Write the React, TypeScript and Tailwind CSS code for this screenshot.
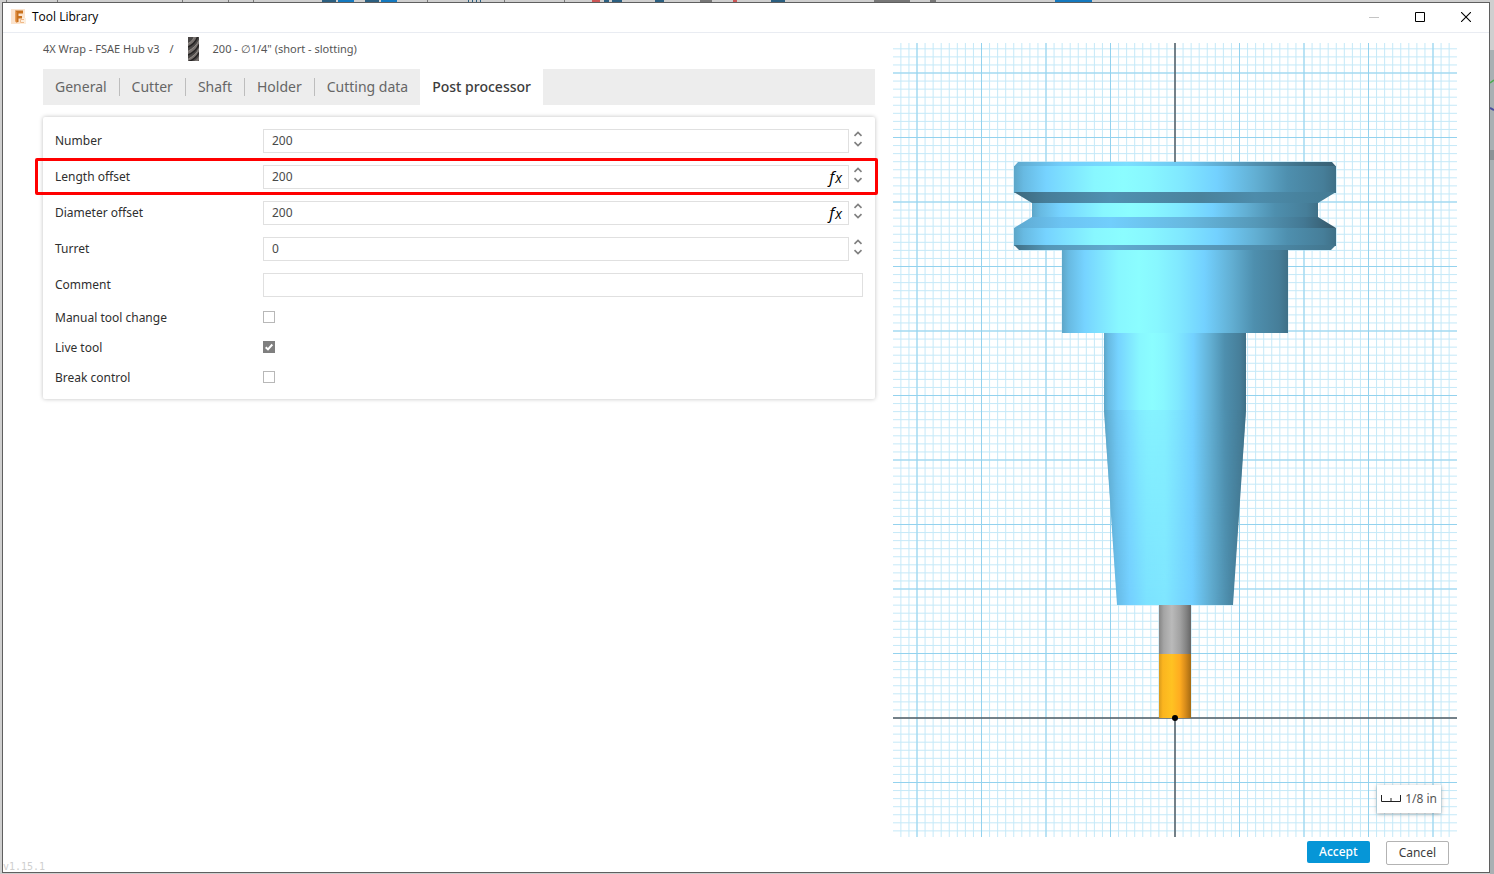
import React, { useState } from 'react';

const TABS = ['General', 'Cutter', 'Shaft', 'Holder', 'Cutting data', 'Post processor'];

// Drawing units of the preview: origin is the tool tip
const VIEW_W = 564;
const VIEW_H = 794;
const ORIGIN_X = 282;
const ORIGIN_Y = 675;
const MAJOR = 64.5;
const MINOR = MAJOR / 8;

interface NumberRowProps {
  id: string;
  label: string;
  value: number;
  onChange: (value: number) => void;
  hasFormula?: boolean;
  highlighted?: boolean;
}

const NumberRow: React.FC<NumberRowProps> = ({
  id,
  label,
  value,
  onChange,
  hasFormula = false,
  highlighted = false
}) => {
  return (
    <div className="relative flex h-9 items-center px-3">
      <label htmlFor={id} className="w-52 shrink-0 text-[#2f2f2f]">{label}</label>
      <div className="flex h-6 min-w-0 flex-1 items-center border border-[#e0e0e0] bg-white">
        <input
          id={id}
          type="text"
          inputMode="numeric"
          value={value}
          onChange={e => onChange(Number(e.target.value) || 0)}
          className="h-full min-w-0 flex-1 bg-transparent px-2 pb-[2px] text-[#4a4a4a] outline-none"
        />
        {hasFormula && (
          <button
            type="button"
            aria-label={`${label} expression`}
            className="flex items-baseline gap-px px-[6px] font-['Open_Sans',sans-serif] text-base leading-5 text-black italic"
          >
            f<span className="text-sm">x</span>
          </button>
        )}
      </div>
      <div className="flex w-[14px] shrink-0 flex-col items-end gap-1 pb-1">
        <button type="button" aria-label={`Increase ${label}`} onClick={() => onChange(value + 1)}>
          <svg className="block h-[6px] w-[10px]" viewBox="0 0 10 6" fill="none" stroke="#808080" strokeWidth={1.7}>
            <path d="M1.5 4.8 5 1.5l3.5 3.3" />
          </svg>
        </button>
        <button type="button" aria-label={`Decrease ${label}`} onClick={() => onChange(value - 1)}>
          <svg className="block h-[6px] w-[10px]" viewBox="0 0 10 6" fill="none" stroke="#808080" strokeWidth={1.7}>
            <path d="M1.5 1.2 5 4.5l3.5-3.3" />
          </svg>
        </button>
      </div>
      {highlighted && (
        <div className="pointer-events-none absolute -top-px -right-[3px] bottom-0 -left-2 rounded-xs border-3 border-[#ff0000]" />
      )}
    </div>
  );
};

interface CheckRowProps {
  id: string;
  label: string;
  defaultChecked?: boolean;
}

const CheckRow: React.FC<CheckRowProps> = ({ id, label, defaultChecked = false }) => (
  <div className="flex h-[30px] items-center px-3">
    <label htmlFor={id} className="w-52 shrink-0 text-[#2f2f2f]">{label}</label>
    <span className="relative mb-[2px] block size-3">
      <input
        id={id}
        type="checkbox"
        defaultChecked={defaultChecked}
        className="peer block size-3 appearance-none border border-[#b8b8b8] bg-white checked:border-[#7f7f7f] checked:bg-[#7f7f7f]"
      />
      <svg
        className="pointer-events-none absolute inset-0 hidden size-3 peer-checked:block"
        viewBox="0 0 12 12"
        fill="none"
        stroke="#fff"
        strokeWidth={2}
      >
        <path d="M2.7 6.2 5 8.4 9.3 3.5" />
      </svg>
    </span>
  </div>
);

const FusionLogo = () => (
  <svg className="h-4 w-4" viewBox="0 0 16 16">
    <rect x="0" y="0" width="14" height="15" fill="#fbe3cd" />
    <rect x="9" y="9" width="6" height="6" fill="#fdeedd" />
    <path d="M4 1.500h8v3H7.500V7H11v2.500H7.500V13L5 13.500V3z" fill="#c8701c" />
    <path d="M4 1.500 5.500 3v10.500L4 12.500z" fill="#e9a05c" />
    <path d="M13 10.500H9.500v3H13" fill="none" stroke="#efb98a" strokeWidth="1" />
  </svg>
);

const EndMillIcon = () => (
  <svg className="h-6 w-[11px]" viewBox="0 0 11 24">
    <rect width="11" height="24" fill="#4a4746" />
    <path d="M0 6C3 5 5 3 6 0h3C8 4 4 7 0 9zM0 14C5 11 9 8 11 3v4C9 11 5 15 0 17zM0 22c5-3 9-6 11-11v4c-2 4-6 7-11 9zM6 24c2-1 4-3 5-5v4l-1 1z" fill="#77716e" />
    <path d="M0 10C5 8 8 4 9.500 0M0 18c5-2 9-6 11-10.500M1 24.500c5-2 8-5 10-9" fill="none" stroke="#242222" strokeWidth="1.400" />
    <path d="M0 6.500C3 5 5 3 6 0M0 14.300C5 11.500 9 8 11 3.300M0 22.300c5-3 9-6 11-11" fill="none" stroke="#a8a29e" strokeWidth="0.600" />
  </svg>
);

const gridOffsets = (step: number, from: number, to: number, origin: number) => {
  const offsets: number[] = [];
  for (let i = Math.ceil((from - origin) / step); origin + i * step <= to; i++) {
    offsets.push(origin + i * step);
  }
  return offsets;
};

const gridPath = (step: number) =>
  gridOffsets(step, 0, VIEW_W, ORIGIN_X).map(x => `M${x} 0V${VIEW_H}`).join('') +
  gridOffsets(step, 0, VIEW_H, ORIGIN_Y).map(y => `M0 ${y}H${VIEW_W}`).join('');

const GRADIENTS: Record<string, [number, string][]> = {
  body: [[0, '#5da6c8'], [0.03, '#68bae2'], [0.1, '#76d3ff'], [0.17, '#7fe4ff'], [0.25, '#88f7ff'], [0.34, '#8bfdff'], [0.42, '#88f7ff'], [0.52, '#80e8ff'], [0.63, '#73d1ff'], [0.75, '#62afd3'], [0.85, '#4e8fae'], [0.96, '#467e99'], [1, '#3f7087']],
  taper: [[0, '#569bbb'], [0.08, '#66b8e2'], [0.18, '#74cfff'], [0.3, '#7ce2ff'], [0.43, '#7fe6ff'], [0.53, '#78d9ff'], [0.62, '#71cfff'], [0.75, '#60acd0'], [0.88, '#4b8aa8'], [1, '#40728a']],
  topChamfer: [[0, '#5fa8cc'], [0.15, '#72cdfb'], [0.35, '#7bdfff'], [0.55, '#6cc4ef'], [0.75, '#528fae'], [0.9, '#3e6f86'], [1, '#375f73']],
  underside: [[0, '#3c687c'], [0.1, '#467d98'], [0.3, '#5091b1'], [0.58, '#4a829c'], [0.75, '#4d8cab'], [1, '#437a93']],
  upside: [[0, '#5ea8cf'], [0.15, '#6cc4f3'], [0.3, '#71cefc'], [0.55, '#66b7de'], [0.75, '#5598b8'], [0.9, '#437893'], [1, '#345768']],
  bottomChamfer: [[0, '#3f6e84'], [0.1, '#5496b6'], [0.3, '#60abd0'], [0.6, '#5799bb'], [0.8, '#4c89a7'], [1, '#42758d']],
  shank: [[0, '#858585'], [0.15, '#a5a5a5'], [0.4, '#bababa'], [0.65, '#a3a3a3'], [0.85, '#838383'], [1, '#666666']],
  flute: [[0, '#d99a1c'], [0.12, '#fbb51f'], [0.4, '#ffc222'], [0.65, '#ffac20'], [0.82, '#d98d1b'], [1, '#a66b12']]
};

const ToolPreview = () => (
  <svg
    className="absolute inset-0 h-full w-full"
    viewBox={`0 0 ${VIEW_W} ${VIEW_H}`}
    preserveAspectRatio="xMidYMid slice"
    role="img"
    aria-label="Tool and holder preview"
  >
    <defs>
      {Object.entries(GRADIENTS).map(([name, stops]) => (
        <linearGradient key={name} id={name}>
          {stops.map(([offset, color]) => (
            <stop key={offset} offset={offset} stopColor={color} />
          ))}
        </linearGradient>
      ))}
      <linearGradient id="taperFade" x1="0" y1="0" x2="0" y2="1">
        <stop offset="0" stopColor="#fff" />
        <stop offset="1" stopColor="#000" />
      </linearGradient>
      <mask id="taperMask">
        <rect x="200" y="367" width="160" height="195" fill="url(#taperFade)" />
      </mask>
    </defs>

    <path d={gridPath(MINOR)} stroke="#c5e9f8" fill="none" />
    <path d={gridPath(MAJOR)} stroke="#93d2ee" fill="none" />
    <path d={`M${ORIGIN_X} 0V${VIEW_H}M0 ${ORIGIN_Y}H${VIEW_W}`} stroke="#2e1f1c" fill="none" />

    {/* Flange */}
    <path d="M125 119H439L443 123.500H121z" fill="url(#topChamfer)" />
    <path d="M121 123H443V150H121z" fill="url(#body)" />
    <path d="M121 149H443L425 160H139z" fill="url(#underside)" />
    <path d="M139 160H425V175H139z" fill="url(#body)" />
    <path d="M139 174H425L443 185H121z" fill="url(#upside)" />
    <path d="M121 185H443V203H121z" fill="url(#body)" />
    <path d="M121 202H443L438 207H126z" fill="url(#bottomChamfer)" />

    {/* Holder body and taper */}
    <path d="M169 207H395V290H169z" fill="url(#body)" />
    <path d="M211 290H353V367H211z" fill="url(#body)" />
    <path d="M211 367H353L340 562H224z" fill="url(#taper)" />
    <path d="M211 367H353L340 562H224z" fill="url(#body)" opacity="0.600" mask="url(#taperMask)" />

    {/* Cutter */}
    <path d="M266 562H298V611H266z" fill="url(#shank)" />
    <path d="M266 611H298V675H266z" fill="url(#flute)" />
    <circle cx={ORIGIN_X} cy={ORIGIN_Y} r="3" fill="#000" />
  </svg>
);

// Slivers of the main application that stay visible around the dialog
const BackdropEdges = () => (
  <>
    <svg className="absolute top-0 left-0 h-[2px] w-full" preserveAspectRatio="none" viewBox="0 0 1494 2">
      <path d="M338 1h16M381 1h16M1055 1h37" stroke="#1479bf" strokeWidth="2" />
      <path d="M322 1h14M365 1h14M468 1h1M472 1h1M476 1h1M480 1h1M604 1h5M612 1h10M655 1h9M771 1h14" stroke="#2b5f80" strokeWidth="2" />
      <path d="M6 1h1M57 1h1M182 1h1M228 1h1M253 1h1M427 1h1M504 1h1M564 1h1M700 1h12M874 1h36M930 1h6" stroke="#777" strokeWidth="2" />
      <path d="M592 1h8M733 1h4" stroke="#c55" strokeWidth="2" />
    </svg>
    <svg className="absolute top-0 right-0 h-full w-1" preserveAspectRatio="none" viewBox="0 0 4 874">
      <path d="M0 50h4v824H0z" fill="#a9b0b3" />
      <path d="M0 83 4 80" stroke="#4bab4e" strokeWidth="1.500" />
      <path d="M0 108 4 110" stroke="#4b4fa0" strokeWidth="2" />
      <path d="M0 150h4v10H0z" fill="#8b9296" />
    </svg>
  </>
);

export default function App() {
  const [activeTab, setActiveTab] = useState('Post processor');
  const [number, setNumber] = useState(200);
  const [lengthOffset, setLengthOffset] = useState(200);
  const [diameterOffset, setDiameterOffset] = useState(200);
  const [turret, setTurret] = useState(0);

  return (
    <div className="relative flex min-h-screen flex-col bg-[#cfcfcf] pt-[2px] pr-1 pb-px pl-[2px] font-['Noto_Sans',sans-serif] text-xs">
      <BackdropEdges />
      <div className="relative flex flex-1 flex-col border border-[#5f5f5f] bg-white">
        <header className="flex h-[30px] items-center border-b border-[#e9ecf2] pb-[2px] pl-2">
          <FusionLogo />
          <h1 className="pl-[5px] font-['Open_Sans',sans-serif] text-xs text-black">Tool Library</h1>
          <div className="ml-auto flex h-full items-center">
            <button type="button" aria-label="Minimize" className="flex h-full w-[46px] items-center justify-center">
              <svg className="h-[10px] w-[10px]" viewBox="0 0 10 10"><path d="M0 5.500h10" stroke="#c4c4c4" /></svg>
            </button>
            <button type="button" aria-label="Maximize" className="flex h-full w-[46px] items-center justify-center">
              <svg className="h-[10px] w-[10px]" viewBox="0 0 10 10"><path d="M.5.5h9v9h-9z" fill="none" stroke="#000" /></svg>
            </button>
            <button type="button" aria-label="Close" className="flex h-full w-[46px] items-center justify-center">
              <svg className="h-[10px] w-[10px]" viewBox="0 0 10 10"><path d="M0 0l10 10M10 0 0 10" stroke="#000" strokeWidth="1.100" /></svg>
            </button>
          </div>
        </header>

        <div className="grid flex-1 grid-cols-[832fr_564fr] gap-[18px] pr-8 pl-10">
          <main className="min-w-0">
            <nav aria-label="Breadcrumb" className="mb-1 flex h-8 items-center text-[11px] text-[#555]">
              <a href="#library">4X Wrap - FSAE Hub v3</a>
              <span className="pr-2 pl-[10px]">/</span>
              <span className="flex items-center gap-[14px] pl-[6px]">
                <EndMillIcon />
                200 - ∅1/4" (short - slotting)
              </span>
            </nav>

            <div role="tablist" className="flex h-9 items-center bg-[#ededed] text-sm text-[#666]">
              {TABS.map((tab, i) => {
                const isActive = tab === activeTab;
                const hasDivider = !isActive && i < TABS.length - 1 && TABS[i + 1] !== activeTab;
                return (
                  <React.Fragment key={tab}>
                    <button
                      type="button"
                      role="tab"
                      aria-selected={isActive}
                      onClick={() => setActiveTab(tab)}
                      className={`h-full px-3 whitespace-nowrap ${
                        isActive ? 'bg-white font-medium text-[#3c3c3c]' : ''
                      }`}
                    >
                      {tab}
                    </button>
                    {hasDivider && <span className="h-[18px] w-px bg-[#bdbdbd]" />}
                  </React.Fragment>
                );
              })}
            </div>

            <form
              className="mt-3 rounded-xs bg-white py-[6px] shadow-[0_0_4px_rgba(0,0,0,0.25)]"
              onSubmit={e => e.preventDefault()}
            >
              <NumberRow id="number" label="Number" value={number} onChange={setNumber} />
              <NumberRow
                id="length-offset"
                label="Length offset"
                value={lengthOffset}
                onChange={setLengthOffset}
                hasFormula
                highlighted
              />
              <NumberRow
                id="diameter-offset"
                label="Diameter offset"
                value={diameterOffset}
                onChange={setDiameterOffset}
                hasFormula
              />
              <NumberRow id="turret" label="Turret" value={turret} onChange={setTurret} />
              <div className="flex h-9 items-center px-3">
                <label htmlFor="comment" className="w-52 shrink-0 text-[#2f2f2f]">Comment</label>
                <input
                  id="comment"
                  type="text"
                  className="h-6 min-w-0 flex-1 border border-[#e0e0e0] px-2 text-[#4a4a4a] outline-none"
                />
              </div>
              <CheckRow id="manual-tool-change" label="Manual tool change" />
              <CheckRow id="live-tool" label="Live tool" defaultChecked />
              <CheckRow id="break-control" label="Break control" />
            </form>
          </main>

          <section aria-label="Preview" className="relative mt-[10px] min-h-96 overflow-hidden">
            <ToolPreview />
            <div className="absolute right-4 bottom-6 flex h-7 items-center gap-1 bg-white px-1 text-[#555] shadow-[0_1px_4px_rgba(0,0,0,0.3)]">
              <svg className="h-2 w-5" viewBox="0 0 20 8" fill="none" stroke="#222">
                <path d="M.5 0v6.500h19V0M10 3v3.500" />
              </svg>
              1/8 in
            </div>
          </section>
        </div>

        <footer className="flex h-[35px] items-start justify-end gap-4 pt-1 pr-10">
          <button type="button" className="h-[22px] rounded-xs bg-[#0696d7] px-3 font-medium text-white">
            Accept
          </button>
          <button type="button" className="h-6 rounded-xs border border-[#b3b3b3] bg-white px-3 text-[#3c3c3c]">
            Cancel
          </button>
        </footer>
        <span className="absolute bottom-0 left-0 font-['DejaVu_Sans_Mono',monospace] text-[10px] leading-[10px] text-[#cfcfcf]">
          v1.15.1
        </span>
      </div>
    </div>
  );
}
